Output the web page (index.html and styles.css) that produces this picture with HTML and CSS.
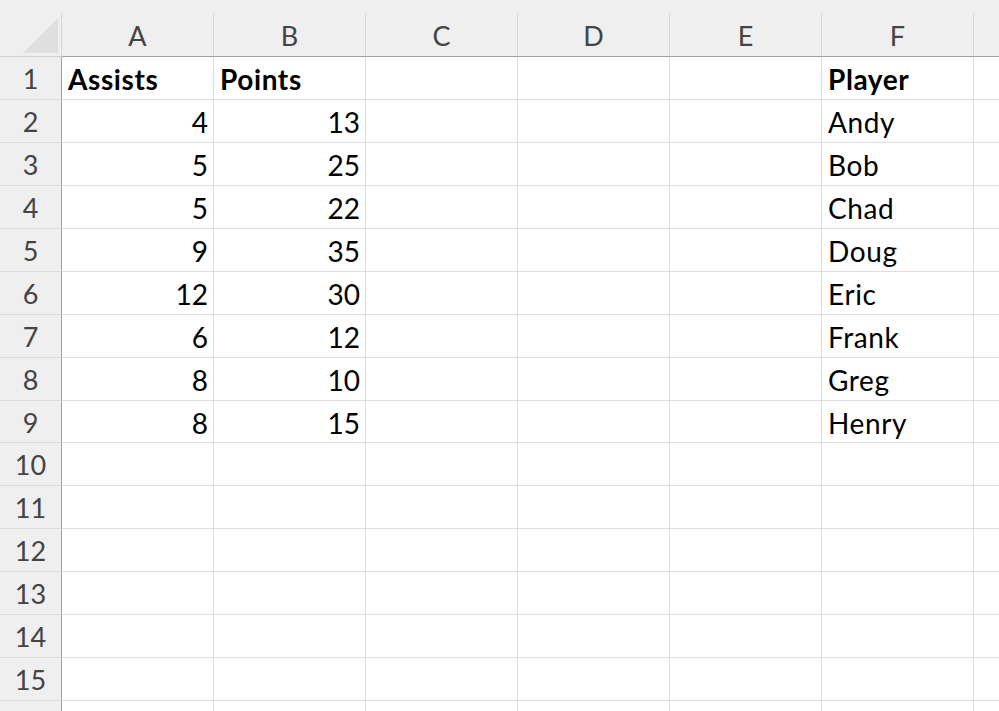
FILE: index.html
```html
<!DOCTYPE html>
<html>
<head>
<meta charset="utf-8">
<link rel="stylesheet" href="styles.css">
</head>
<body>
<div class="sheet">
  <div class="strip"></div>
  <div class="corner"><span class="tri"></span></div>
  <div class="ch">A</div><div class="ch">B</div><div class="ch">C</div><div class="ch">D</div><div class="ch">E</div><div class="ch">F</div><div class="ch last"></div>

  <div class="rh">1</div><div class="c b">Assists</div><div class="c b">Points</div><div class="c"></div><div class="c"></div><div class="c"></div><div class="c b">Player</div><div class="c last"></div>
  <div class="rh">2</div><div class="c n">4</div><div class="c n">13</div><div class="c"></div><div class="c"></div><div class="c"></div><div class="c">Andy</div><div class="c last"></div>
  <div class="rh">3</div><div class="c n">5</div><div class="c n">25</div><div class="c"></div><div class="c"></div><div class="c"></div><div class="c">Bob</div><div class="c last"></div>
  <div class="rh">4</div><div class="c n">5</div><div class="c n">22</div><div class="c"></div><div class="c"></div><div class="c"></div><div class="c">Chad</div><div class="c last"></div>
  <div class="rh">5</div><div class="c n">9</div><div class="c n">35</div><div class="c"></div><div class="c"></div><div class="c"></div><div class="c">Doug</div><div class="c last"></div>
  <div class="rh">6</div><div class="c n">12</div><div class="c n">30</div><div class="c"></div><div class="c"></div><div class="c"></div><div class="c">Eric</div><div class="c last"></div>
  <div class="rh">7</div><div class="c n">6</div><div class="c n">12</div><div class="c"></div><div class="c"></div><div class="c"></div><div class="c">Frank</div><div class="c last"></div>
  <div class="rh">8</div><div class="c n">8</div><div class="c n">10</div><div class="c"></div><div class="c"></div><div class="c"></div><div class="c">Greg</div><div class="c last"></div>
  <div class="rh">9</div><div class="c n">8</div><div class="c n">15</div><div class="c"></div><div class="c"></div><div class="c"></div><div class="c">Henry</div><div class="c last"></div>
  <div class="rh">10</div><div class="c"></div><div class="c"></div><div class="c"></div><div class="c"></div><div class="c"></div><div class="c"></div><div class="c last"></div>
  <div class="rh">11</div><div class="c"></div><div class="c"></div><div class="c"></div><div class="c"></div><div class="c"></div><div class="c"></div><div class="c last"></div>
  <div class="rh">12</div><div class="c"></div><div class="c"></div><div class="c"></div><div class="c"></div><div class="c"></div><div class="c"></div><div class="c last"></div>
  <div class="rh">13</div><div class="c"></div><div class="c"></div><div class="c"></div><div class="c"></div><div class="c"></div><div class="c"></div><div class="c last"></div>
  <div class="rh">14</div><div class="c"></div><div class="c"></div><div class="c"></div><div class="c"></div><div class="c"></div><div class="c"></div><div class="c last"></div>
  <div class="rh">15</div><div class="c"></div><div class="c"></div><div class="c"></div><div class="c"></div><div class="c"></div><div class="c"></div><div class="c last"></div>
  <div class="rh"></div><div class="c"></div><div class="c"></div><div class="c"></div><div class="c"></div><div class="c"></div><div class="c"></div><div class="c last"></div>
</div>
</body>
</html>
```

FILE: styles.css
```css
html, body {
  margin: 0;
  padding: 0;
  width: 999px;
  height: 711px;
  overflow: hidden;
  background: #ffffff;
}

.sheet {
  display: grid;
  grid-template-columns: 62px 152px 152px 152px 152px 152px 152px 1fr;
  grid-template-rows: 14px 43px repeat(16, 42.95px);
  font-family: Lato, "Open Sans", sans-serif;
  font-size: 28px;
  color: #000;
}

.strip {
  grid-column: 1 / -1;
  background: #efefef;
}

.corner {
  position: relative;
  background: #efefef;
  border-right: 1px solid #d6d6d6;
  border-bottom: 1px solid #cfcfcf;
}

.tri {
  position: absolute;
  left: 23px;
  top: 4px;
  width: 35px;
  height: 35px;
  background: #dfdfdf;
  clip-path: polygon(100% 0, 100% 100%, 0 100%);
}

.ch {
  background: #efefef;
  color: #444444;
  font-size: 27px;
  text-align: center;
  line-height: 44px;
  border-right: 1px solid #d6d6d6;
  border-bottom: 1px solid #9f9f9f;
}

.rh {
  background: #efefef;
  color: #444444;
  font-size: 27px;
  text-align: center;
  line-height: 44px;
  border-right: 1px solid #9f9f9f;
  border-bottom: 1px solid #dadada;
}

.c {
  background: #ffffff;
  line-height: 45px;
  padding: 0 5px 0 6px;
  letter-spacing: 0.6px;
  white-space: nowrap;
  overflow: hidden;
  border-right: 1px solid #dedede;
  border-bottom: 1px solid #dedede;
}

.n {
  text-align: right;
  letter-spacing: 0;
}

.b {
  font-weight: bold;
}

.last {
  border-right: none;
}
```
